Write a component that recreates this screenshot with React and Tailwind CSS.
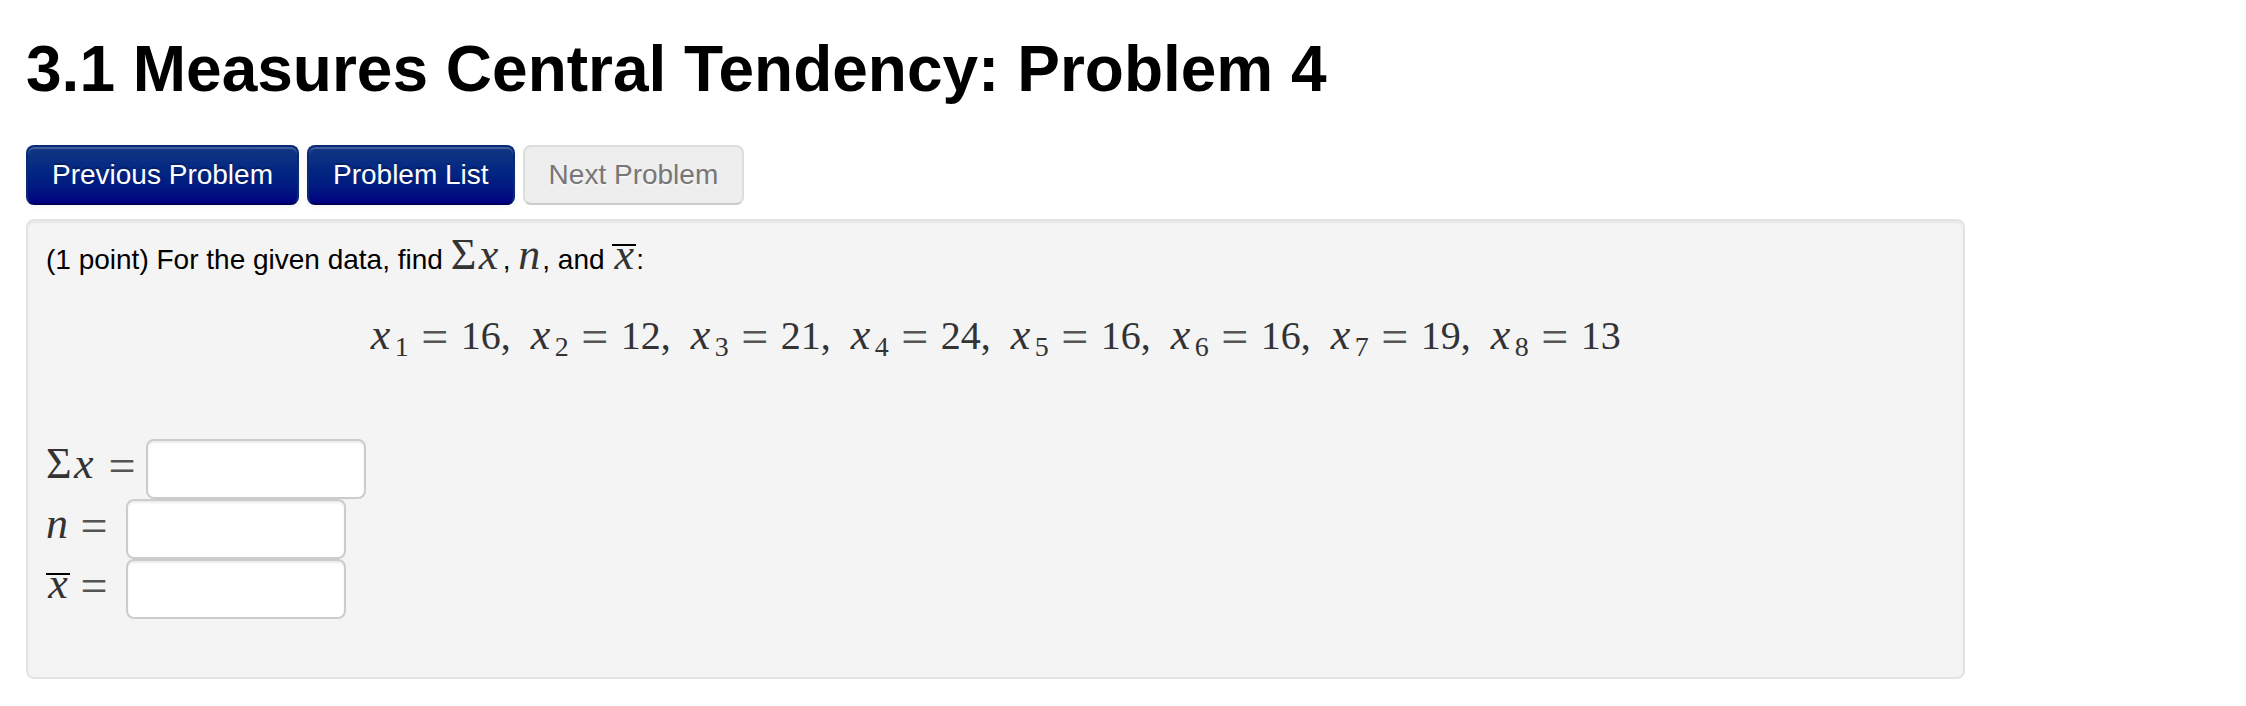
const data = [16, 12, 21, 24, 16, 16, 19, 13]

const buttonBase = "h-15 rounded-lg border-2 px-6 text-[28px] leading-10"
const primaryButton =
  "border-[#0a2a78] border-b-[#00005c] bg-linear-to-b from-[#133783] to-[#000080] text-white shadow-[inset_0_2px_0_rgba(255,255,255,0.2),0_2px_4px_rgba(0,0,0,0.05)] text-shadow-[0_-2px_0_rgba(0,0,0,0.25)]"

const mathFont = "font-['Liberation_Serif','Times_New_Roman',serif] text-[40px] text-[#333]"

function Variable({ children }) {
  return <i className="inline-block w-6 text-[44px] leading-none">{children}</i>
}

function Sum() {
  return (
    <>
      <span className="inline-block w-7 text-[44px] leading-none">Σ</span>
      <Variable>x</Variable>
    </>
  )
}

function Mean() {
  return (
    <i className="inline-block w-6 border-t-2 border-black text-center text-[44px] leading-[18px]">x</i>
  )
}

function Equals() {
  return (
    <span className="inline-block w-12 text-center align-[-4px] text-[48px] leading-none text-[#555]">=</span>
  )
}

function Term({ index, value, last }) {
  return (
    <span className="inline-block whitespace-nowrap">
      <Variable>x</Variable>
      <sub className="inline-block w-4 text-[28px] leading-none">{index}</sub>
      <Equals />
      <span className="ml-0.5">
        {value}
        {!last && ","}
      </span>
    </span>
  )
}

function AnswerRow({ id, label, gap }) {
  return (
    <div className={`flex h-15 items-start ${gap}`}>
      <label htmlFor={id} className={`${mathFont} leading-[52px] whitespace-nowrap`}>
        {label}
        <Equals />
      </label>
      <input
        id={id}
        type="text"
        className="h-15 w-55 rounded-lg border-2 border-[#ccc] bg-white px-3 text-[28px] shadow-[inset_0_2px_2px_rgba(0,0,0,0.075)]"
      />
    </div>
  )
}

export default function App() {
  return (
    <main className="bg-white px-[26px] pt-[37px] pb-6 font-['Liberation_Sans',Arial,sans-serif] text-[28px] text-black">
      <h1 className="text-[64px] leading-16 font-bold">3.1 Measures Central Tendency: Problem 4</h1>

      <nav className="mt-11 flex gap-2">
        <button type="button" className={`${buttonBase} ${primaryButton}`}>
          Previous Problem
        </button>
        <button type="button" className={`${buttonBase} ${primaryButton}`}>
          Problem List
        </button>
        <button
          type="button"
          disabled
          className={`${buttonBase} border-[#ddd] border-b-[#ccc] bg-[#eee] text-[#777] text-shadow-[0_2px_0_rgba(255,255,255,0.5)]`}
        >
          Next Problem
        </button>
      </nav>

      <section className="mt-[14px] w-[88.4%] rounded-lg border-2 border-[#e3e3e3] bg-[#f4f4f4] px-[18px] pt-3 pb-[58px] shadow-[inset_0_2px_2px_rgba(0,0,0,0.05)]">
        <p className="leading-10">
          (1 point) For the given data, find{" "}
          <span className={`${mathFont} leading-none`}>
            <Sum />
          </span>
          ,{" "}
          <span className={`${mathFont} leading-none`}>
            <Variable>n</Variable>
          </span>
          , and{" "}
          <span className={`${mathFont} leading-none`}>
            <Mean />
          </span>
          :
        </p>

        {/* Data values */}
        <div className={`mt-8 flex flex-wrap justify-center gap-x-5 leading-12 ${mathFont}`}>
          {data.map((value, i) => (
            <Term key={i} index={i + 1} value={value} last={i === data.length - 1} />
          ))}
        </div>

        {/* Answers */}
        <form className="mt-[78px]">
          <AnswerRow id="sum" gap="gap-0" label={<Sum />} />
          <AnswerRow id="count" gap="gap-2" label={<Variable>n</Variable>} />
          <AnswerRow id="mean" gap="gap-2" label={<Mean />} />
        </form>
      </section>
    </main>
  )
}
